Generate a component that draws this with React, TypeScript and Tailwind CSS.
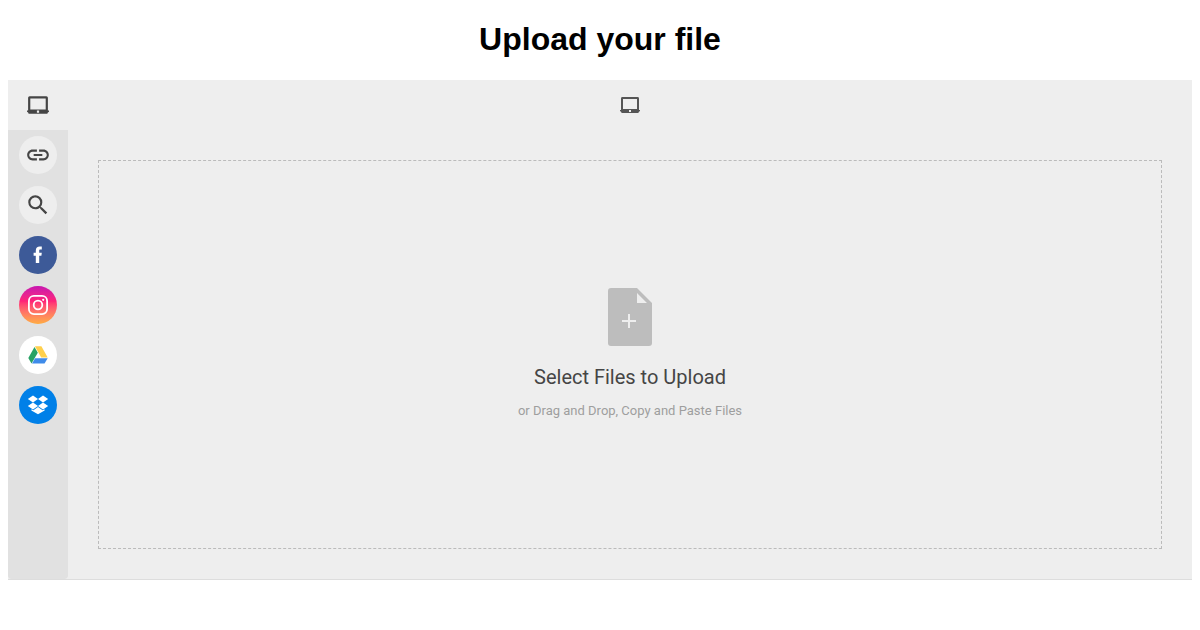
import React, { useState } from 'react';

type IconProps = { className?: string };

function LaptopIcon({ className }: IconProps) {
  return (
    <svg viewBox="0 0 20 16" className={className} fill="currentColor" aria-hidden="true">
      <path
        fillRule="evenodd"
        d="M2.4 0h15.2A1.4 1.4 0 0 1 19 1.4V13h1v.8c0 .4-.3.7-.7.7H19c0 .8-.6 1.5-1.4 1.5H2.4C1.6 16 1 15.300 1 14.500H.7c-.4 0-.7-.3-.7-.7V13h1V1.400A1.400 1.400 0 0 1 2.400 0ZM3 2v10h14V2H3Zm6 11v2h2v-2H9Z"
      />
    </svg>
  );
}

function LinkIcon() {
  return (
    <svg viewBox="0 0 24 24" className="size-[26px]" fill="currentColor" aria-hidden="true">
      <path d="M3.9 12c0-1.71 1.39-3.1 3.1-3.1h4V7H7c-2.76 0-5 2.24-5 5s2.24 5 5 5h4v-1.9H7c-1.71 0-3.1-1.39-3.1-3.1zM8 13h8v-2H8v2zm9-6h-4v1.9h4c1.71 0 3.1 1.39 3.1 3.1s-1.39 3.1-3.1 3.1h-4V17h4c2.76 0 5-2.24 5-5s-2.24-5-5-5z" />
    </svg>
  );
}

function SearchIcon() {
  return (
    <svg viewBox="0 0 24 24" className="size-[26px]" fill="currentColor" aria-hidden="true">
      <path d="M15.5 14h-.79l-.28-.27A6.471 6.471 0 0 0 16 9.5 6.5 6.5 0 1 0 9.5 16c1.61 0 3.09-.59 4.23-1.57l.27.28v.79l5 4.99L20.49 19l-4.99-5zm-6 0C7.01 14 5 11.99 5 9.5S7.01 5 9.5 5 14 7.01 14 9.5 11.99 14 9.5 14z" />
    </svg>
  );
}

function FacebookIcon() {
  return (
    <svg viewBox="0 0 38 38" className="size-[38px]" aria-hidden="true">
      <path
        fill="#fff"
        d="M16.8 27v-7.2h-2.200v-3h2.200v-2.200c0-2.800 1.500-4.200 4-4.200.9 0 1.700.1 2 .2v3h-1.300c-1.100 0-1.300.500-1.300 1.300v1.900h2.600l-.4 3h-2.200V27h-3.400Z"
      />
    </svg>
  );
}

function InstagramIcon() {
  return (
    <svg viewBox="0 0 38 38" className="size-[38px]" fill="none" stroke="#fff" aria-hidden="true">
      <rect x="9.9" y="9.9" width="18.2" height="18.2" rx="5" strokeWidth="1.8" />
      <circle cx="19" cy="19" r="4.3" strokeWidth="1.8" />
      <circle cx="24.2" cy="13.8" r="1.1" fill="#fff" stroke="none" />
    </svg>
  );
}

function DriveIcon() {
  return (
    <svg viewBox="0 0 38 38" className="size-[38px]" aria-hidden="true">
      <path fill="#28a265" d="M15.500 11 9.300 22l3.200 5.500 6.300-10.800L15.500 11Z" />
      <path fill="#ffd04d" d="M15.900 10.300h6.500l6.300 11.300h-6.500l-6.300-11.300Z" />
      <path fill="#3f8bea" d="M16.100 22.200h12.600l-3.200 5.400H13l3.100-5.400Z" />
    </svg>
  );
}

function DropboxIcon() {
  return (
    <svg viewBox="0 0 38 38" className="size-[38px]" fill="#fff" aria-hidden="true">
      <path d="m14 9.600 5 3.400-5 3.500-5.200-3.500L14 9.600Z" />
      <path d="m24 9.600 5.200 3.400-5.200 3.500-5-3.500 5-3.400Z" />
      <path d="m14 16.600 5 3.500-5 3.500-5.200-3.500 5.200-3.500Z" />
      <path d="m24 16.600 5.200 3.500-5.200 3.500-5-3.500 5-3.500Z" />
      <path d="m19 21.100 4.600 3.200 2-1v1.100L19 28.300l-6.600-3.900v-1.100l2 1 4.600-3.200Z" />
    </svg>
  );
}

function FileIcon() {
  return (
    <svg viewBox="0 0 44 58" className="h-[58px] w-11" aria-hidden="true">
      <path
        fill="#bdbdbd"
        fillRule="evenodd"
        d="M3 0h26l15 15v40a3 3 0 0 1-3 3H3a3 3 0 0 1-3-3V3a3 3 0 0 1 3-3Zm26 5v10h10L29 5Z"
      />
      <path stroke="#eee" strokeWidth="2" d="M14 33h14M21 26v14" />
    </svg>
  );
}

const sources = [
  { id: 'local', label: 'My Device', badge: '', icon: <LaptopIcon className="h-[18px] w-[22px]" /> },
  { id: 'url', label: 'Web Address', badge: 'bg-[#eee]', icon: <LinkIcon /> },
  { id: 'search', label: 'Image Search', badge: 'bg-[#eee]', icon: <SearchIcon /> },
  { id: 'facebook', label: 'Facebook', badge: 'bg-[#3d5a98]', icon: <FacebookIcon /> },
  {
    id: 'instagram',
    label: 'Instagram',
    badge: 'bg-linear-to-b from-[#c813b0] via-[#ff2277] via-40% to-[#ffac40]',
    icon: <InstagramIcon />,
  },
  { id: 'drive', label: 'Google Drive', badge: 'bg-white', icon: <DriveIcon /> },
  { id: 'dropbox', label: 'Dropbox', badge: 'bg-[#0080e8]', icon: <DropboxIcon /> },
];

export default function App() {
  const [active, setActive] = useState('local');

  return (
    <main className="px-2">
      <h1 className="pt-5 pb-[22px] text-center font-['Liberation_Sans',sans-serif] text-[32px] leading-[38px] font-bold text-black">
        Upload your file
      </h1>

      <section className="flex min-h-[500px] border-b border-[#ddd] bg-[#eee] font-[Roboto,sans-serif] text-[#454545]">
        {/* Sources */}
        <nav className="flex w-[60px] shrink-0 flex-col rounded-b-sm bg-[#e1e1e1]">
          {sources.map((source) => (
            <button
              key={source.id}
              type="button"
              aria-label={source.label}
              onClick={() => setActive(source.id)}
              className={`flex h-[50px] items-center justify-center ${
                active === source.id ? 'bg-[#eee]' : ''
              }`}
            >
              <span
                className={`flex size-[38px] items-center justify-center rounded-full ${source.badge}`}
              >
                {source.icon}
              </span>
            </button>
          ))}
        </nav>

        <div className="flex flex-1 flex-col">
          {/* Header */}
          <header className="flex h-[50px] items-center justify-center text-[#555]">
            <LaptopIcon className="h-4 w-5" />
          </header>

          {/* Drop area */}
          <div className="flex flex-1 p-[30px]">
            <label
              htmlFor="files"
              className="flex flex-1 cursor-pointer flex-col items-center justify-center border border-dashed border-[#bbb]"
            >
              <FileIcon />
              <span className="mt-4 text-xl leading-[30px]">Select Files to Upload</span>
              <span className="mt-[9px] text-[13px] leading-5 text-[#9e9e9e]">
                or Drag and Drop, Copy and Paste Files
              </span>
              <input id="files" type="file" multiple className="sr-only" />
            </label>
          </div>
        </div>
      </section>
    </main>
  );
}
